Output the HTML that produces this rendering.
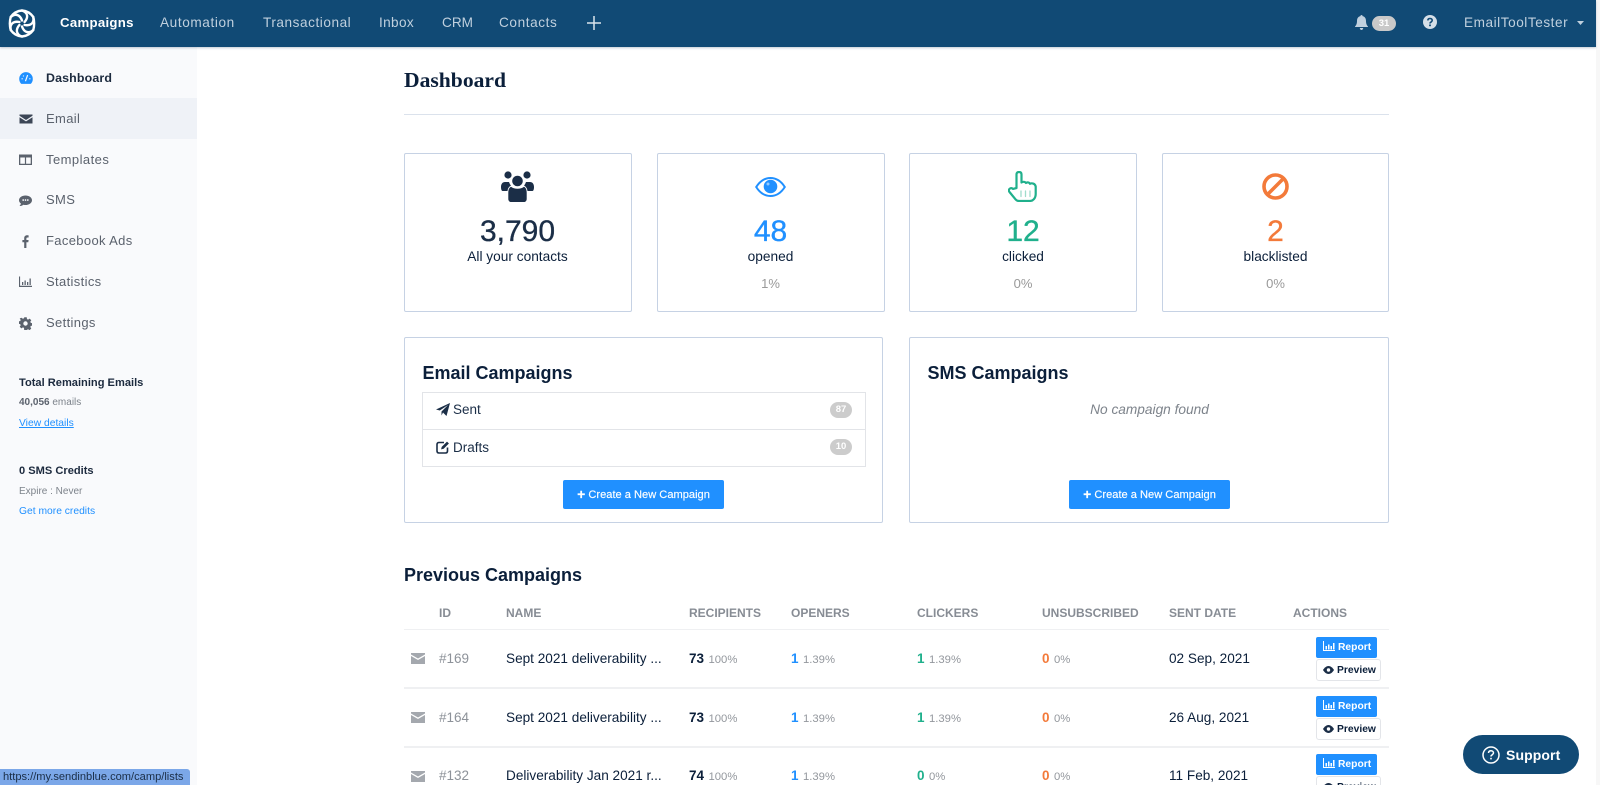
<!DOCTYPE html>
<html lang="en">
<head>
<meta charset="utf-8">
<title>Dashboard</title>
<style>
html,body{margin:0;padding:0;width:1600px;height:785px;overflow:hidden;background:#fff}
body{position:relative;font-family:"Liberation Sans",sans-serif;color:#0b1f3a}
.a{position:absolute}
.t{position:absolute;white-space:nowrap;line-height:20px}
.c{transform:translateX(-50%)}
#top{left:0;top:0;width:1596px;height:47px;background:#114a75;box-shadow:0 1px 2px rgba(20,50,90,.25)}
#strip{left:1596px;top:0;width:4px;height:785px;background:#f7f7f7}
.n{font-size:13.6px;letter-spacing:.35px;color:#c0d0de;top:13px}
#side{left:0;top:47px;width:197px;height:738px;background:#f9fafc}
#band{left:0;top:98px;width:197px;height:41px;background:#eff2f7}
.s{left:46px;font-size:13px;letter-spacing:.35px;color:#5b626d}
.si{left:19px;width:13px;height:13px;fill:#5b626d}
.card{box-sizing:border-box;border:1px solid #c6d2e4;border-radius:2px;background:#fff}
.num{font-size:30px;line-height:34px;-webkit-text-stroke:.35px currentColor}
.lab{font-size:13.7px;color:#0b1f3a}
.pct{font-size:13px;color:#999}
.h{font-weight:bold;font-size:18px;color:#0b1f3a}
.btn{background:#2090ff;border-radius:2px;color:#fff;font-size:11.1px;text-align:center;line-height:29px;height:29px;white-space:nowrap;-webkit-text-stroke:.15px #fff}
.th{font-size:12px;font-weight:bold;color:#878c94;top:603px}
.ln{left:404px;width:985px;height:2px;background:#eff0f2}
.id{left:439px;font-size:13.5px;color:#8d9299}
.nm{left:506px;font-size:13.6px;color:#0b1f3a}
.d{font-size:13.6px;color:#0b1f3a;left:1169px}
.b{font-size:13.5px;font-weight:bold}
.g{font-size:11.3px;color:#93979d}
.rep{left:1316px;width:61px;height:21px;background:#2090ff;border-radius:2px;color:#fff;font-size:10.3px;font-weight:bold;line-height:21px;white-space:nowrap;box-sizing:border-box;padding-left:7px}
.pre{left:1316px;width:65px;height:22px;background:#fff;border:1px solid #e3e5e9;border-radius:3px;color:#0b1f3a;font-size:10.3px;font-weight:bold;line-height:21px;white-space:nowrap;box-sizing:border-box;padding-left:6px}
.rep svg,.pre svg{vertical-align:-1px;margin-right:3px}
.mail{left:411px;width:14px;height:11px}
.bdg{background:#ccc;color:#fff;font-weight:bold;font-size:9.5px;text-align:center;border-radius:8px;width:22px;height:16px;line-height:16px}
</style>
</head>
<body>
<div class="a" id="strip"></div>
<div class="a" id="side"></div>
<div class="a" id="band"></div>
<div class="a" id="top"></div>

<svg class="a" style="left:8px;top:9px" width="28" height="29" viewBox="-14 -14.5 28 29" fill="none" stroke="#fff" stroke-width="2.400" stroke-linecap="round" stroke-linejoin="round">
<path d="M0-13Q7-12.500 11.300-6.500 13 0 11.300 6.500 7 12.500 0 13-7 12.500-11.300 6.500-13 0-11.300-6.500-7-12.500 0-13Z"/>
<path d="M0-13C6-11 6.500-6 2.600-1.500"/>
<path transform="rotate(60)" d="M0-13C6-11 6.500-6 2.600-1.500"/>
<path transform="rotate(120)" d="M0-13C6-11 6.500-6 2.600-1.500"/>
<path transform="rotate(180)" d="M0-13C6-11 6.500-6 2.600-1.500"/>
<path transform="rotate(240)" d="M0-13C6-11 6.500-6 2.600-1.500"/>
<path transform="rotate(300)" d="M0-13C6-11 6.500-6 2.600-1.500"/>
</svg>

<div class="t n" style="left:60px;color:#fff;font-weight:bold;font-size:13.2px;letter-spacing:.3px">Campaigns</div>
<div class="t n" style="left:160px;letter-spacing:.6px">Automation</div>
<div class="t n" style="left:263px;letter-spacing:.55px">Transactional</div>
<div class="t n" style="left:379px">Inbox</div>
<div class="t n" style="left:442px;letter-spacing:0">CRM</div>
<div class="t n" style="left:499px;letter-spacing:.6px">Contacts</div>
<svg class="a" style="left:587px;top:16px" width="14" height="14" viewBox="0 0 14 14"><path d="M7 0V14M0 7H14" stroke="#dbe4ec" stroke-width="1.5"/></svg>

<svg class="a" style="left:1355px;top:15px" width="13" height="15" viewBox="0 0 13 15"><path d="M6.500 0C7.200 0 7.600.5 7.600 1.100 10 1.600 11 3.500 11 6c0 3 1 4.500 2 5.500V12H0v-.5C1 10.500 2 9 2 6c0-2.500 1-4.400 3.400-4.900C5.400.5 5.800 0 6.500 0ZM4.800 13h3.400c0 1-.8 2-1.700 2s-1.700-1-1.700-2Z" fill="#c0d0de"/></svg>
<div class="a" style="left:1372px;top:16px;width:24px;height:15px;border-radius:8px;background:#c9c9c9;color:#fff;font-size:9.5px;font-weight:bold;text-align:center;line-height:15px">31</div>
<svg class="a" style="left:1423px;top:15px" width="14" height="14" viewBox="0 0 14 14"><circle cx="7" cy="7" r="7" fill="#d5dfe8"/><path d="M4.800 5.400C4.900 4.200 5.800 3.500 7 3.500c1.300 0 2.200.8 2.200 1.900 0 1.700-2.200 1.600-2.200 3.100" fill="none" stroke="#114a75" stroke-width="1.600"/><rect x="6.100" y="9.500" width="1.800" height="1.700" fill="#114a75"/></svg>
<div class="t n" style="left:1464px;letter-spacing:.55px">EmailToolTester</div>
<svg class="a" style="left:1577px;top:21px" width="7" height="4" viewBox="0 0 7 4"><path d="M0 0H7L3.500 4Z" fill="#c0d0de"/></svg>

<!-- sidebar -->
<svg class="a si" style="top:71px;width:14px;height:14px;fill:#2090ff" viewBox="0 0 13 13"><path d="M6.500 1A6.300 6.300 0 0 0 .2 7.300c0 1.800.7 3.400 1.900 4.700h8.800a6.300 6.300 0 0 0 1.900-4.700A6.300 6.300 0 0 0 6.500 1Z"/><path d="M6 9.500 8 3.800M2.400 7.200h1M9.600 7.200h1M3.800 4.300l.6.600" stroke="#f9fafc" stroke-width="1.100"/></svg>
<div class="t s" style="top:67.500px;color:#1c2a3e;font-weight:bold;font-size:12.4px;letter-spacing:.15px">Dashboard</div>
<svg class="a si" style="top:112px;left:18.500px;width:14px;fill:#3c4656" viewBox="0 0 13 13"><path d="M0 2.500h13v1.300L6.500 8 0 3.800Z"/><path d="M0 5.200 6.500 9.400 13 5.200V11.500H0Z"/></svg>
<div class="t s" style="top:108.500px">Email</div>
<svg class="a si" style="top:153px" viewBox="0 0 13 13"><path fill-rule="evenodd" d="M0 1.500h13v10.500H0ZM1.300 4.500V10.700H5.900V4.500ZM7.100 4.500V10.700H11.700V4.500Z"/></svg>
<div class="t s" style="top:149.500px;letter-spacing:.45px">Templates</div>
<svg class="a si" style="top:194px" viewBox="0 0 13 13"><path fill-rule="evenodd" d="M6.500 1.500C10 1.500 13 3.500 13 6.200S10 11 6.500 11c-.8 0-1.500-.1-2.200-.3C3.300 11.600 2 12 .5 12c.8-.8 1.300-1.600 1.400-2.500C.7 8.600 0 7.500 0 6.200 0 3.500 3 1.500 6.500 1.500ZM3.500 5.300v1.600h1.400V5.300ZM5.800 5.300v1.600h1.400V5.300ZM8.100 5.300v1.600h1.400V5.300Z"/></svg>
<div class="t s" style="top:190px">SMS</div>
<svg class="a si" style="top:235px" viewBox="0 0 13 13"><path d="M5.200 13V7.300H3.400V5h1.800V3.400C5.200 1.400 6.300.3 8.100.3c.8 0 1.300.1 1.500.1v2.100H8.500c-.9 0-1.100.4-1.100 1.100V5h2.200l-.3 2.300H7.400V13Z"/></svg>
<div class="t s" style="top:231px">Facebook Ads</div>
<svg class="a si" style="top:275px" viewBox="0 0 13 13"><path d="M0 1.500h1.100V10.800H13V12H0ZM3 7h1.300v3H3ZM5.500 5.500h1.300V10H5.500ZM8 7h1.300v3H8ZM10.500 3.500h1.300V10h-1.300Z"/></svg>
<div class="t s" style="top:272px">Statistics</div>
<svg class="a si" style="top:317px" viewBox="0 0 13 13"><path fill-rule="evenodd" d="M5.300.3h2.400l.3 1.800 1.100.5 1.500-1 1.700 1.700-1 1.500.5 1.100 1.800.3v2.400l-1.800.3-.5 1.100 1 1.500-1.700 1.700-1.500-1-1.100.5-.3 1.800H5.300L5 10.900l-1.100-.5-1.500 1L.7 9.700l1-1.500-.5-1.100L-.6 6.800V4.400l1.800-.3.500-1.100-1-1.500L2.400.8l1.500 1L5 1.300ZM6.500 4.300a2.200 2.200 0 1 0 0 4.400 2.200 2.200 0 0 0 0-4.400Z"/></svg>
<div class="t s" style="top:313px">Settings</div>

<div class="t" style="left:19px;top:372.500px;font-size:11.100px;font-weight:bold;color:#1c2a3e">Total Remaining Emails</div>
<div class="t" style="left:19px;top:392.500px;font-size:10px;color:#7d838b"><b style="color:#5b626d">40,056</b> emails</div>
<div class="t" style="left:19px;top:413.500px;font-size:10.300px;color:#2090ff;text-decoration:underline">View details</div>
<div class="t" style="left:19px;top:461px;font-size:11.100px;font-weight:bold;color:#1c2a3e">0 SMS Credits</div>
<div class="t" style="left:19px;top:481.500px;font-size:10px;color:#7d838b">Expire : Never</div>
<div class="t" style="left:19px;top:501.500px;font-size:10.300px;color:#2090ff">Get more credits</div>

<!-- main -->
<div class="t" style="left:404px;top:68px;font:bold 21.600px/24px 'Liberation Serif',serif;color:#0b1f3a">Dashboard</div>
<div class="a" style="left:404px;top:114px;width:985px;height:1px;background:#dbe2ec"></div>

<div class="a card" style="left:404px;top:153px;width:228px;height:159px"></div>
<div class="a card" style="left:657px;top:153px;width:228px;height:159px"></div>
<div class="a card" style="left:909px;top:153px;width:228px;height:159px"></div>
<div class="a card" style="left:1162px;top:153px;width:227px;height:159px"></div>

<svg class="a" style="left:501px;top:171px" width="33" height="31" viewBox="0 0 33 31" fill="#1b2e47"><circle cx="7" cy="4" r="3.600"/><circle cx="26" cy="4" r="3.600"/><circle cx="16.500" cy="10" r="5.800" stroke="#fff" stroke-width="1"/><path d="M0 16c0-3 1.500-5 4-5h4c.6 1.500 1 2.500 2 3.500-1.500 1-3 2-3.500 5.500H1.500C.5 20 0 18 0 16Z"/><path d="M33 16c0-3-1.500-5-4-5h-4c-.6 1.500-1 2.500-2 3.500 1.500 1 3 2 3.500 5.500h5C32.500 20 33 18 33 16Z"/><path d="M10 15.700c1.500 1.300 4 2 6.500 2s5-.7 6.500-2c1.800.8 2.700 3 2.700 6v6c0 2-1 3.300-3 3.300H10.300c-2 0-3-1.300-3-3.300v-6c0-3 .9-5.200 2.700-6Z"/></svg>
<svg class="a" style="left:755px;top:177px" width="31" height="20" viewBox="0 0 31 20"><path d="M1.200 10C5 4 10 1 15.500 1S26 4 29.800 10C26 16 21 19 15.500 19S5 16 1.200 10Z" fill="none" stroke="#2090ff" stroke-width="2"/><circle cx="15.500" cy="9.500" r="6.800" fill="#2090ff"/><circle cx="13" cy="7" r="1.500" fill="#fff" opacity=".5"/></svg>
<svg class="a" style="left:1008px;top:171px" width="29" height="31" viewBox="0 0 29 31" fill="none" stroke="#20b08c" stroke-width="2.200" stroke-linejoin="round" stroke-linecap="round"><path d="M8.500 17V3.500C8.500 1.800 9.500 1 11 1s2.500.8 2.500 2.500V11.500C15 10.500 17 10.500 18 12c1.300-1 3.300-.7 4 .8 1.500-.9 5-.6 5.700 2.700V23c0 4-2.500 7-6 7H11c-1.500 0-2.500-.5-3.500-1.700L1.500 21c-1-1.200-.8-2.500.2-3.300 1.300-1 2.500-.5 3.300.2Z"/><path d="M13 20v5.500M17.500 20v5.500M22 20v5.500" stroke="#9fdccb" stroke-width="1.300"/></svg>
<svg class="a" style="left:1262px;top:173px" width="27" height="27" viewBox="0 0 27 27" fill="none" stroke="#f37a3a" stroke-width="3.600"><circle cx="13.500" cy="13.500" r="11.500"/><path d="M5.500 21.500 21.500 5.500"/></svg>

<div class="t c num" style="left:517.500px;top:215px;color:#1b2e47">3,790</div>
<div class="t c lab" style="left:517.500px;top:247px">All your contacts</div>
<div class="t c num" style="left:770.500px;top:215px;color:#2090ff">48</div>
<div class="t c lab" style="left:770.500px;top:247px">opened</div>
<div class="t c pct" style="left:770.500px;top:274px">1%</div>
<div class="t c num" style="left:1023px;top:215px;color:#20b08c">12</div>
<div class="t c lab" style="left:1023px;top:247px">clicked</div>
<div class="t c pct" style="left:1023px;top:274px">0%</div>
<div class="t c num" style="left:1275.500px;top:215px;color:#f37a3a">2</div>
<div class="t c lab" style="left:1275.500px;top:247px">blacklisted</div>
<div class="t c pct" style="left:1275.500px;top:274px">0%</div>

<div class="a card" style="left:404px;top:337px;width:479px;height:186px"></div>
<div class="a card" style="left:909px;top:337px;width:480px;height:186px"></div>
<div class="t h" style="left:422.500px;top:363px">Email Campaigns</div>
<div class="t h" style="left:927.500px;top:363px">SMS Campaigns</div>

<div class="a" style="left:422px;top:392px;width:444px;height:75px;box-sizing:border-box;border:1px solid #e2e4e8"></div>
<div class="a" style="left:422px;top:429px;width:444px;height:1px;background:#e2e4e8"></div>
<svg class="a" style="left:436px;top:403px" width="14" height="13" viewBox="0 0 14 13"><path d="M14 0 10.500 13 7 9.500 5.500 12.500V8.500L12 2 3.800 7.500 0 6.500Z" fill="#1b2e47"/></svg>
<div class="t" style="left:453px;top:400px;font-size:13.500px;color:#1b2e47">Sent</div>
<div class="a bdg" style="left:830px;top:402px">87</div>
<svg class="a" style="left:436px;top:440px" width="14" height="14" viewBox="0 0 14 14" fill="none" stroke="#1b2e47" stroke-width="1.600"><path d="M8 2.500H3C1.800 2.500 1 3.300 1 4.500V11c0 1.200.8 2 2 2h6.500c1.200 0 2-.8 2-2V7.500"/><path d="M5.500 9 6 7l5-5 1.500 1.500L7.500 8.500Z" fill="#1b2e47" stroke-width=".6"/></svg>
<div class="t" style="left:453px;top:438px;font-size:13.500px;color:#1b2e47">Drafts</div>
<div class="a bdg" style="left:830px;top:439px">10</div>
<div class="a btn" style="left:563px;top:480px;width:161px"><b style="font-size:14px;vertical-align:-1px">+</b> Create a New Campaign</div>

<div class="t c" style="left:1149.500px;top:400px;font-size:13.700px;font-style:italic;color:#7d838b">No campaign found</div>
<div class="a btn" style="left:1069px;top:480px;width:161px"><b style="font-size:14px;vertical-align:-1px">+</b> Create a New Campaign</div>

<div class="t h" style="left:404px;top:565px">Previous Campaigns</div>

<div class="t th" style="left:439px">ID</div>
<div class="t th" style="left:506px">NAME</div>
<div class="t th" style="left:689px">RECIPIENTS</div>
<div class="t th" style="left:791px">OPENERS</div>
<div class="t th" style="left:917px">CLICKERS</div>
<div class="t th" style="left:1042px">UNSUBSCRIBED</div>
<div class="t th" style="left:1169px">SENT DATE</div>
<div class="t th" style="left:1293px">ACTIONS</div>
<div class="a ln" style="top:629px;height:1px"></div>
<div class="a ln" style="top:687px"></div>
<div class="a ln" style="top:746px"></div>

<!-- row 1 -->
<svg class="a mail" style="top:653px" viewBox="0 0 14 11" fill="#a4a8ae"><path d="M0 0h14v1.500L7 5.500 0 1.500Z"/><path d="M0 3 7 7l7-4v8H0Z"/></svg>
<div class="t id" style="top:649px">#169</div>
<div class="t nm" style="top:649px">Sept 2021 deliverability ...</div>
<div class="t" style="left:689px;top:649px"><span class="b">73</span> <span class="g">100%</span></div>
<div class="t" style="left:791px;top:649px"><span class="b" style="color:#2090ff">1</span> <span class="g">1.39%</span></div>
<div class="t" style="left:917px;top:649px"><span class="b" style="color:#20b08c">1</span> <span class="g">1.39%</span></div>
<div class="t" style="left:1042px;top:649px"><span class="b" style="color:#f37a3a">0</span> <span class="g">0%</span></div>
<div class="t d" style="top:649px">02 Sep, 2021</div>
<div class="a rep" style="top:637px"><svg width="12" height="10" viewBox="0 0 12 10" fill="#fff"><path d="M0 0h1v9h11v1H0ZM2.500 5h1.500v3.500H2.500ZM5 3.500h1.500v5H5ZM7.500 5H9v3.500H7.500ZM10 2h1.500v6.500H10Z"/></svg>Report</div>
<div class="a pre" style="top:659px"><svg width="11" height="8" viewBox="0 0 11 8"><path d="M0 4C1.500 1.500 3.500 0 5.500 0S9.500 1.500 11 4C9.500 6.500 7.500 8 5.500 8S1.500 6.500 0 4Z" fill="#1b2e47"/><circle cx="5.500" cy="4" r="1.700" fill="#fff"/></svg>Preview</div>

<!-- row 2 -->
<svg class="a mail" style="top:712px" viewBox="0 0 14 11" fill="#a4a8ae"><path d="M0 0h14v1.500L7 5.500 0 1.500Z"/><path d="M0 3 7 7l7-4v8H0Z"/></svg>
<div class="t id" style="top:708px">#164</div>
<div class="t nm" style="top:708px">Sept 2021 deliverability ...</div>
<div class="t" style="left:689px;top:708px"><span class="b">73</span> <span class="g">100%</span></div>
<div class="t" style="left:791px;top:708px"><span class="b" style="color:#2090ff">1</span> <span class="g">1.39%</span></div>
<div class="t" style="left:917px;top:708px"><span class="b" style="color:#20b08c">1</span> <span class="g">1.39%</span></div>
<div class="t" style="left:1042px;top:708px"><span class="b" style="color:#f37a3a">0</span> <span class="g">0%</span></div>
<div class="t d" style="top:708px">26 Aug, 2021</div>
<div class="a rep" style="top:696px"><svg width="12" height="10" viewBox="0 0 12 10" fill="#fff"><path d="M0 0h1v9h11v1H0ZM2.500 5h1.500v3.500H2.500ZM5 3.500h1.500v5H5ZM7.500 5H9v3.500H7.500ZM10 2h1.500v6.500H10Z"/></svg>Report</div>
<div class="a pre" style="top:718px"><svg width="11" height="8" viewBox="0 0 11 8"><path d="M0 4C1.500 1.500 3.500 0 5.500 0S9.500 1.500 11 4C9.500 6.500 7.500 8 5.500 8S1.500 6.500 0 4Z" fill="#1b2e47"/><circle cx="5.500" cy="4" r="1.700" fill="#fff"/></svg>Preview</div>

<!-- row 3 -->
<svg class="a mail" style="top:771px" viewBox="0 0 14 11" fill="#a4a8ae"><path d="M0 0h14v1.500L7 5.500 0 1.500Z"/><path d="M0 3 7 7l7-4v8H0Z"/></svg>
<div class="t id" style="top:766px">#132</div>
<div class="t nm" style="top:766px">Deliverability Jan 2021 r...</div>
<div class="t" style="left:689px;top:766px"><span class="b">74</span> <span class="g">100%</span></div>
<div class="t" style="left:791px;top:766px"><span class="b" style="color:#2090ff">1</span> <span class="g">1.39%</span></div>
<div class="t" style="left:917px;top:766px"><span class="b" style="color:#20b08c">0</span> <span class="g">0%</span></div>
<div class="t" style="left:1042px;top:766px"><span class="b" style="color:#f37a3a">0</span> <span class="g">0%</span></div>
<div class="t d" style="top:766px">11 Feb, 2021</div>
<div class="a rep" style="top:754px"><svg width="12" height="10" viewBox="0 0 12 10" fill="#fff"><path d="M0 0h1v9h11v1H0ZM2.500 5h1.500v3.500H2.500ZM5 3.500h1.500v5H5ZM7.500 5H9v3.500H7.500ZM10 2h1.500v6.500H10Z"/></svg>Report</div>
<div class="a pre" style="top:776px"><svg width="11" height="8" viewBox="0 0 11 8"><path d="M0 4C1.500 1.500 3.500 0 5.500 0S9.500 1.500 11 4C9.500 6.500 7.500 8 5.500 8S1.500 6.500 0 4Z" fill="#1b2e47"/><circle cx="5.500" cy="4" r="1.700" fill="#fff"/></svg>Preview</div>

<!-- support -->
<div class="a" style="left:1463px;top:735px;width:116px;height:39px;border-radius:20px;background:#114a75"></div>
<svg class="a" style="left:1482px;top:746px" width="18" height="18" viewBox="0 0 18 18" fill="none" stroke="#fff"><circle cx="9" cy="9" r="8" stroke-width="1.500"/><path d="M6.500 7C6.600 5.600 7.600 4.800 9 4.800c1.500 0 2.500.9 2.500 2.100 0 1.900-2.500 1.800-2.500 3.600" stroke-width="1.500"/><rect x="8.200" y="11.800" width="1.600" height="1.600" fill="#fff" stroke="none"/></svg>
<div class="t" style="left:1506px;top:745px;font-size:14px;font-weight:bold;color:#fff;letter-spacing:.1px">Support</div>

<!-- status -->
<div class="a" style="left:0;top:769px;width:190px;height:16px;background:#7ba7e8;border-radius:0 3px 0 0;color:#1b2e47;font-size:11.100px;line-height:16px;padding-left:3px;box-sizing:border-box;white-space:nowrap">https://my.sendinblue.com/camp/lists</div>
</body>
</html>
